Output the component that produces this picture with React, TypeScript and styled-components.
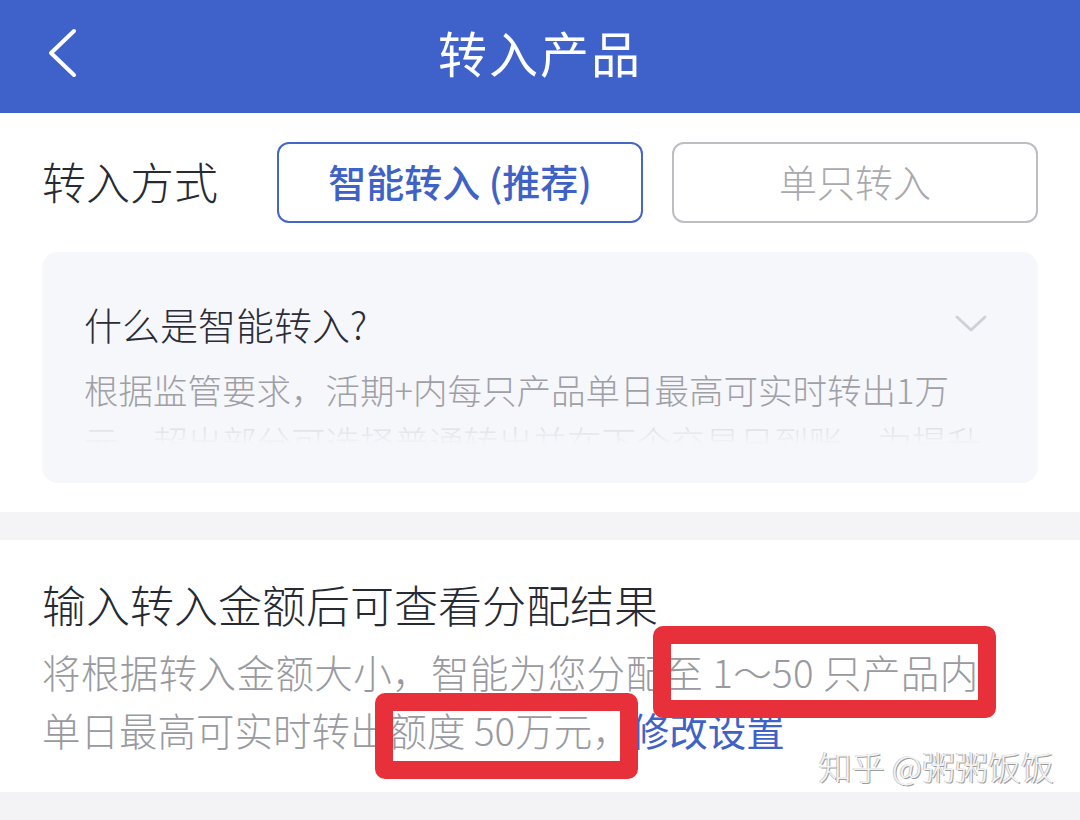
import React from "react";
import styled, { createGlobalStyle } from "styled-components";

const Global = createGlobalStyle`
  html, body { margin: 0; padding: 0; background: #ffffff; }
  body { font-family: "Noto Sans CJK SC", "Noto Sans", sans-serif; width: 1080px; height: 820px; overflow: hidden; }
  * { box-sizing: border-box; }
`;

const Page = styled.div`
  width: 1080px;
  height: 820px;
  display: flex;
  flex-direction: column;
  background: #f3f3f5;
`;

const Header = styled.header`
  height: 113px;
  background: #3e62ca;
  display: grid;
  grid-template-columns: 120px 1fr 120px;
  align-items: center;
  color: #fff;
`;

const BackBtn = styled.div`
  padding-left: 46px;
  display: flex;
  align-items: center;
  height: 100%;
  padding-bottom: 8px;
`;

const Title = styled.h1`
  margin: 0;
  text-align: center;
  font-size: 49px;
  font-weight: 400;
  letter-spacing: 2px;
  padding-bottom: 10px;
`;

const Section = styled.section<{ $pt: number; $pb: number }>`
  background: #fff;
  padding: ${(p) => p.$pt}px 42px ${(p) => p.$pb}px;
  position: relative;
`;

const ModeRow = styled.div`
  display: flex;
  align-items: center;
  height: 81px;
`;

const Label = styled.div`
  font-size: 44px;
  font-weight: 300;
  color: #262a33;
  width: 236px;
  padding-bottom: 4px;
`;

const Buttons = styled.div`
  display: flex;
  gap: 29px;
`;

const ModeButton = styled.div<{ $active?: boolean }>`
  width: 366px;
  height: 81px;
  border-radius: 12px;
  border: 2px solid ${(p) => (p.$active ? "#4466c8" : "#bdbdc2")};
  color: ${(p) => (p.$active ? "#3f62c6" : "#a9a9ae")};
  font-size: 38px;
  font-weight: ${(p) => (p.$active ? 500 : 300)};
  display: flex;
  align-items: center;
  justify-content: center;
  padding-bottom: 4px;
`;

const Card = styled.div`
  margin-top: 29px;
  height: 231px;
  background: #f6f7fb;
  border-radius: 16px;
  padding: 44px 42px 0;
  position: relative;
  overflow: hidden;
`;

const CardHead = styled.div`
  display: flex;
  justify-content: space-between;
  align-items: center;
`;

const CardTitle = styled.div`
  font-size: 38px;
  font-weight: 300;
  color: #2a2d37;
`;

const CardBody = styled.div`
  margin-top: 12px;
  font-size: 34.5px;
  font-weight: 300;
  line-height: 52px;
  color: #9fa0a6;
  height: 92px;
  overflow: hidden;
  position: relative;
  white-space: nowrap;
`;

const Fade = styled.div`
  position: absolute;
  left: 0;
  right: 0;
  top: 52px;
  height: 40px;
  background: linear-gradient(to bottom, rgba(246, 247, 251, 0.55), rgba(246, 247, 251, 1) 75%);
`;

const Gap = styled.div`
  height: 28px;
  background: #f4f4f6;
`;

const InfoTitle = styled.div`
  font-size: 44px;
  font-weight: 300;
  color: #262a33;
  line-height: 60px;
`;

const InfoText = styled.div`
  margin-top: 8px;
  font-size: 38.5px;
  font-weight: 300;
  line-height: 58px;
  color: #999aa0;
  white-space: nowrap;
`;

const InfoLine = styled.div<{ $ls?: number }>`
  letter-spacing: ${(p) => p.$ls ?? 0}px;
`;

const Link = styled.span`
  color: #3f62c6;
  font-weight: 400;
`;

const Highlight = styled.div<{ $l: number; $t: number; $w: number; $h: number }>`
  position: absolute;
  left: ${(p) => p.$l}px;
  top: ${(p) => p.$t}px;
  width: ${(p) => p.$w}px;
  height: ${(p) => p.$h}px;
  border: 18px solid #e8303a;
  border-radius: 10px;
`;

const Watermark = styled.div`
  position: absolute;
  right: 26px;
  bottom: 2px;
  font-size: 33px;
  font-weight: 300;
  color: #f4f4f4;
  text-shadow: 1px 1px 0 #9c9c9c, -1px 0 0 #c8c8c8;
`;

const Rest = styled.div`
  flex: 1;
  background: #f3f3f5;
`;

export default function App() {
  return (
    <>
      <Global />
      <Page>
        <Header>
          <BackBtn>
            <svg width="32" height="50" viewBox="0 0 32 50" fill="none">
              <path d="M28 3 L5 25 L28 47" stroke="#fff" strokeWidth="4" strokeLinecap="round" strokeLinejoin="round" />
            </svg>
          </BackBtn>
          <Title>转入产品</Title>
          <div />
        </Header>
        <Section $pt={29} $pb={29}>
          <ModeRow>
            <Label>转入方式</Label>
            <Buttons>
              <ModeButton $active>智能转入 (推荐)</ModeButton>
              <ModeButton>单只转入</ModeButton>
            </Buttons>
          </ModeRow>
          <Card>
            <CardHead>
              <CardTitle>什么是智能转入?</CardTitle>
              <svg width="34" height="22" viewBox="0 0 34 22" fill="none" style={{ marginRight: 8 }}>
                <path d="M3 4 L17 17 L31 4" stroke="#cfd1d9" strokeWidth="3" strokeLinecap="round" strokeLinejoin="round" />
              </svg>
            </CardHead>
            <CardBody>
              <div>根据监管要求，活期+内每只产品单日最高可实时转出1万</div>
              <div>元，超出部分可选择普通转出并在下个交易日到账，为提升</div>
              <Fade />
            </CardBody>
          </Card>
        </Section>
        <Gap />
        <Section $pt={34} $pb={34}>
          <InfoTitle>输入转入金额后可查看分配结果</InfoTitle>
          <InfoText>
            <InfoLine $ls={0.4}>将根据转入金额大小，智能为您分配至 1～50 只产品内</InfoLine>
            <InfoLine>
              单日最高可实时转出额度 50万元，<Link>修改设置</Link>
            </InfoLine>
          </InfoText>
          <Highlight $l={653} $t={86} $w={343} $h={92} />
          <Highlight $l={375} $t={153} $w={263} $h={86} />
          <Watermark>知乎 @粥粥饭饭</Watermark>
        </Section>
        <Rest />
      </Page>
    </>
  );
}
